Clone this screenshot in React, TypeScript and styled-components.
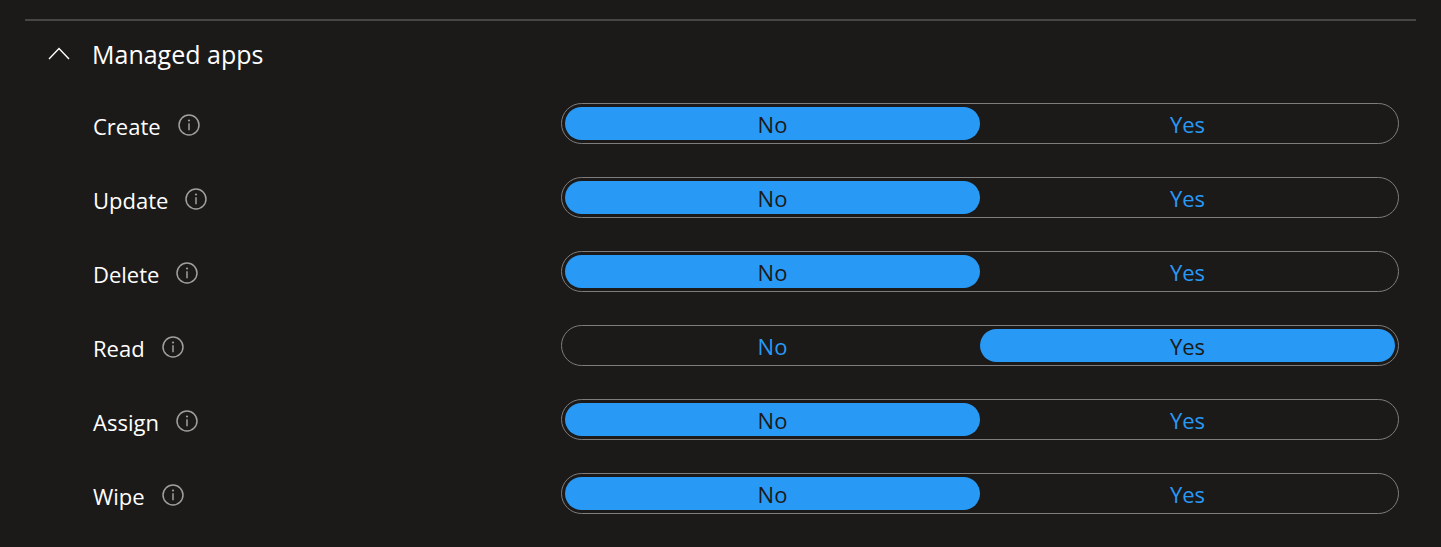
import styled, { createGlobalStyle } from "styled-components";

const GlobalStyle = createGlobalStyle`
  html, body {
    margin: 0;
    padding: 0;
    background: #1b1a19;
  }
  body {
    font-family: "Open Sans", "Noto Sans", sans-serif;
    color: #ffffff;
  }
`;

const permissions = [
  { name: "Create", value: "No" },
  { name: "Update", value: "No" },
  { name: "Delete", value: "No" },
  { name: "Read", value: "Yes" },
  { name: "Assign", value: "No" },
  { name: "Wipe", value: "No" },
];

function ChevronUp() {
  return (
    <svg width="22" height="13" viewBox="0 0 22 13" fill="none">
      <path d="M1 12 L11 1.5 L21 12" stroke="#ffffff" strokeWidth="1.4" />
    </svg>
  );
}

function InfoIcon() {
  return (
    <svg width="22" height="22" viewBox="0 0 22 22" fill="none">
      <circle cx="11" cy="11" r="10" stroke="#a19f9d" strokeWidth="1.5" />
      <circle cx="11" cy="6.5" r="1.1" fill="#a19f9d" />
      <path d="M11 9.2 V16.2" stroke="#a19f9d" strokeWidth="1.5" />
    </svg>
  );
}

export default function App() {
  return (
    <>
      <GlobalStyle />
      <Section>
        <Divider />
        <Header>
          <ChevronUp />
          <Title>Managed apps</Title>
        </Header>
        <Rows>
          {permissions.map((p) => (
            <Row key={p.name}>
              <Label>
                <span>{p.name}</span>
                <InfoIcon />
              </Label>
              <Toggle>
                {["No", "Yes"].map((opt) => (
                  <Option key={opt} $active={p.value === opt}>
                    {opt}
                  </Option>
                ))}
              </Toggle>
            </Row>
          ))}
        </Rows>
      </Section>
    </>
  );
}

const Section = styled.div`
  padding: 19px 25px 0 25px;
`;

const Divider = styled.div`
  height: 2px;
  background: #474644;
`;

const Header = styled.div`
  display: flex;
  align-items: center;
  height: 66px;
  padding-left: 23px;
  gap: 22px;

  svg {
    margin-top: -2px;
  }
`;

const Title = styled.span`
  font-size: 25px;
  line-height: 1;
  color: #ffffff;
`;

const Rows = styled.div`
  display: flex;
  flex-direction: column;
  gap: 33px;
  padding: 16px 17px 0 68px;
`;

const Row = styled.div`
  display: flex;
  align-items: center;
  height: 41px;
`;

const Label = styled.div`
  width: 468px;
  display: flex;
  align-items: center;
  gap: 17px;
  font-size: 22px;
  color: #ffffff;
  padding-top: 4px;

  svg {
    margin-top: -1px;
  }
`;

const Toggle = styled.div`
  flex: 1;
  height: 41px;
  box-sizing: border-box;
  border: 1px solid #7f7d7b;
  border-radius: 21px;
  padding: 3px;
  display: grid;
  grid-template-columns: 1fr 1fr;
`;

const Option = styled.div<{ $active: boolean }>`
  display: flex;
  align-items: center;
  justify-content: center;
  border-radius: 17px;
  font-size: 22px;
  background: ${(p) => (p.$active ? "#2899f5" : "transparent")};
  color: ${(p) => (p.$active ? "#1b1a19" : "#2899f5")};
`;
